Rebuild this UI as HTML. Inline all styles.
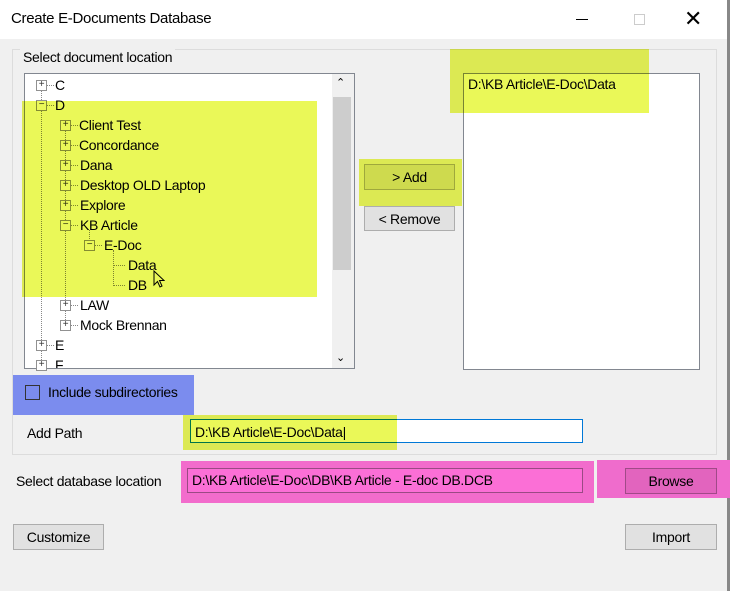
<!DOCTYPE html>
<html><head><style>
*{margin:0;padding:0;box-sizing:border-box}
body{width:730px;height:591px;background:#f0f0f0;font-family:"Liberation Sans",sans-serif;font-size:14px;color:#000;position:relative;overflow:hidden;letter-spacing:-0.3px}
.a{position:absolute}
.btn{position:absolute;background:#e1e1e1;border:1px solid #adadad;text-align:center;line-height:24px;font-size:14px}
.hl{position:absolute;background:#eaf858;mix-blend-mode:multiply}
.t{position:absolute;white-space:nowrap;line-height:20px}
.pb{position:absolute;width:11px;height:11px;border:1px solid #919191;background:#fff;font-size:10px;line-height:8px;text-align:center;color:#333}
.dh{position:absolute;border-top:1px dotted #888;width:7px}
.dv{position:absolute;border-left:1px dotted #888}
</style></head><body>
<div class="a" style="left:0;top:0;width:730px;height:39px;background:#fff"></div>
<div class="t" style="left:11px;top:9px;font-size:15px">Create E-Documents Database</div>
<div class="a" style="left:576px;top:19px;width:12px;height:1px;background:#000"></div>
<div class="a" style="left:634px;top:14px;width:11px;height:11px;border:1px solid #ccc"></div>
<div class="a" style="left:684px;top:6px;font-size:22px;line-height:26px;font-weight:300">✕</div>
<div class="a" style="left:727px;top:0;width:3px;height:591px;background:#888"></div>
<div class="a" style="left:12px;top:49px;width:705px;height:406px;border:1px solid #dcdcdc"></div>
<div class="t" style="left:20px;top:47px;background:#f0f0f0;padding:0 3px">Select document location</div>
<div class="a" style="left:24px;top:73px;width:331px;height:296px;background:#fff;border:1px solid #828790"></div>
<div class="a" style="left:332px;top:74px;width:22px;height:294px;background:#f0f0f0"></div>
<div class="a" style="top:97px;width:18px;height:173px;left:333px;background:#cdcdcd"></div>
<div class="t" style="left:336px;top:73px;font-size:11px">&#8963;</div>
<div class="t" style="left:336px;top:348px;font-size:11px">&#8964;</div>
<div class="dv" style="left:41px;top:90px;height:278px"></div>
<div class="dv" style="left:65px;top:130px;height:196px"></div>
<div class="dv" style="left:89px;top:230px;height:15px"></div>
<div class="dv" style="left:113px;top:250px;height:36px"></div>
<div class="pb" style="left:36px;top:80px">+</div><div class="dh" style="left:47px;top:85px"></div><div class="t" style="left:55px;top:75px">C</div>
<div class="pb" style="left:36px;top:100px">−</div><div class="dh" style="left:47px;top:105px"></div><div class="t" style="left:55px;top:95px">D</div>
<div class="pb" style="left:60px;top:120px">+</div><div class="dh" style="left:71px;top:125px"></div><div class="t" style="left:79px;top:115px">Client Test</div>
<div class="pb" style="left:60px;top:140px">+</div><div class="dh" style="left:71px;top:145px"></div><div class="t" style="left:79px;top:135px">Concordance</div>
<div class="pb" style="left:60px;top:160px">+</div><div class="dh" style="left:71px;top:165px"></div><div class="t" style="left:80px;top:155px">Dana</div>
<div class="pb" style="left:60px;top:180px">+</div><div class="dh" style="left:71px;top:185px"></div><div class="t" style="left:80px;top:175px">Desktop OLD Laptop</div>
<div class="pb" style="left:60px;top:200px">+</div><div class="dh" style="left:71px;top:205px"></div><div class="t" style="left:80px;top:195px">Explore</div>
<div class="pb" style="left:60px;top:220px">−</div><div class="dh" style="left:71px;top:225px"></div><div class="t" style="left:80px;top:215px">KB Article</div>
<div class="pb" style="left:84px;top:240px">−</div><div class="dh" style="left:95px;top:245px"></div><div class="t" style="left:104px;top:235px">E-Doc</div>
<div class="dh" style="left:114px;top:265px;width:11px"></div><div class="t" style="left:128px;top:255px">Data</div>
<div class="dh" style="left:114px;top:285px;width:11px"></div><div class="t" style="left:128px;top:275px">DB</div>
<div class="pb" style="left:60px;top:300px">+</div><div class="dh" style="left:71px;top:305px"></div><div class="t" style="left:80px;top:295px">LAW</div>
<div class="pb" style="left:60px;top:320px">+</div><div class="dh" style="left:71px;top:325px"></div><div class="t" style="left:80px;top:315px">Mock Brennan</div>
<div class="pb" style="left:36px;top:340px">+</div><div class="dh" style="left:47px;top:345px"></div><div class="t" style="left:55px;top:335px">E</div>
<div class="pb" style="left:36px;top:360px">+</div><div class="t" style="left:55px;top:355px;height:13px;overflow:hidden">F</div>
<svg class="a" style="left:153px;top:270px" width="12" height="18" viewBox="0 0 12 18"><path d="M1 1 L1 15 L4.5 11.5 L7 17 L9 16 L6.5 10.5 L11 10.5 Z" fill="#fff" stroke="#000" stroke-width="1"/></svg>
<div class="hl" style="left:22px;top:101px;width:295px;height:196px"></div>
<div class="btn" style="left:364px;top:164px;width:91px;height:26px">&gt; Add</div>
<div class="btn" style="left:364px;top:206px;width:91px;height:25px">&lt; Remove</div>
<div class="hl" style="left:359px;top:159px;width:103px;height:47px"></div>
<div class="a" style="left:463px;top:73px;width:237px;height:297px;background:#fff;border:1px solid #828790"></div>
<div class="t" style="left:468px;top:74px">D:\KB Article\E-Doc\Data</div>
<div class="hl" style="left:450px;top:49px;width:199px;height:64px"></div>
<div class="a" style="left:13px;top:375px;width:181px;height:40px;background:#7b8cee"></div>
<div class="a" style="left:25px;top:385px;width:15px;height:15px;border:1px solid #333"></div>
<div class="t" style="left:48px;top:382px">Include subdirectories</div>
<div class="t" style="left:27px;top:423px">Add Path</div>
<div class="a" style="left:190px;top:419px;width:393px;height:24px;background:#fff;border:1px solid #0078d7"></div>
<div class="t" style="left:195px;top:422px">D:\KB Article\E-Doc\Data|</div>
<div class="hl" style="left:183px;top:415px;width:214px;height:35px"></div>
<div class="t" style="left:16px;top:471px">Select database location</div>
<div class="a" style="left:181px;top:461px;width:413px;height:42px;background:#f26ccc"></div>
<div class="a" style="left:187px;top:468px;width:396px;height:25px;background:#fb6fd6;border:1px solid #9a4a84"></div>
<div class="t" style="left:192px;top:470px">D:\KB Article\E-Doc\DB\KB Article - E-doc DB.DCB</div>
<div class="a" style="left:597px;top:460px;width:133px;height:38px;background:#ef6ccc"></div>
<div class="btn" style="left:625px;top:468px;width:92px;height:26px;background:#e264be;border-color:#a04a88">Browse</div>
<div class="btn" style="left:13px;top:524px;width:91px;height:26px">Customize</div>
<div class="btn" style="left:625px;top:524px;width:92px;height:26px">Import</div>
</body></html>
